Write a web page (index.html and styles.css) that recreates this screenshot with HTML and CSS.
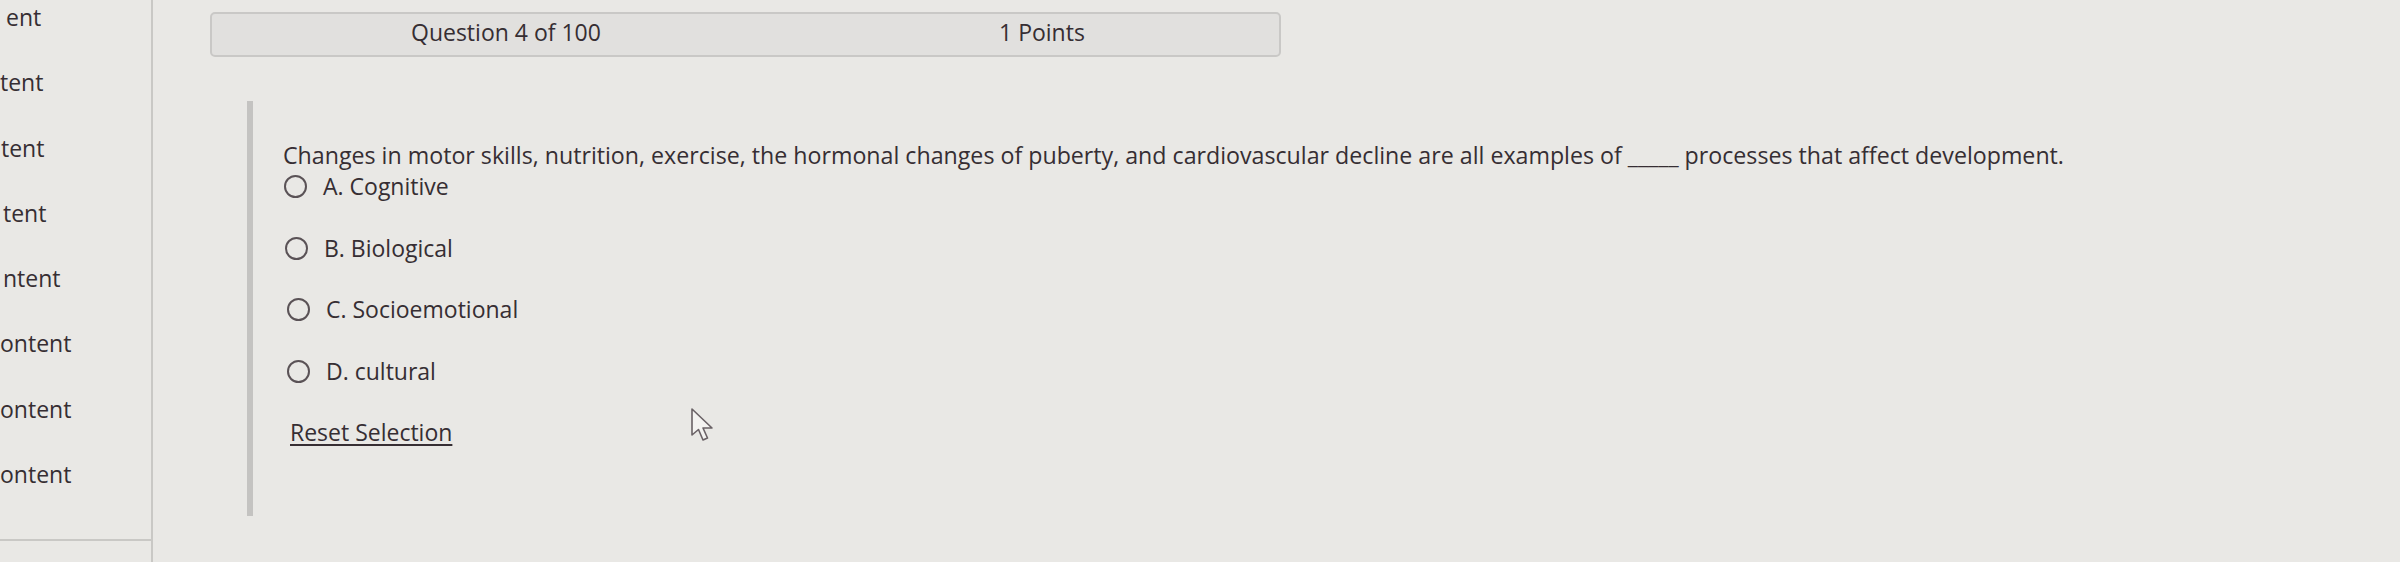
FILE: index.html
```html
<!DOCTYPE html>
<html lang="en">
<head>
<meta charset="utf-8">
<title>Question 4 of 100</title>
<link rel="stylesheet" href="styles.css">
</head>
<body>
<div class="layout">
  <aside class="sidebar">
    <ul class="nav">
      <li class="nav-item i1">ent</li>
      <li class="nav-item i2">tent</li>
      <li class="nav-item i3">tent</li>
      <li class="nav-item i4">tent</li>
      <li class="nav-item i5">ntent</li>
      <li class="nav-item i6">ontent</li>
      <li class="nav-item i7">ontent</li>
      <li class="nav-item i8">ontent</li>
    </ul>
    <div class="sidebar-footer"></div>
  </aside>
  <main class="main">
    <header class="qbar">
      <span class="qnum">Question 4 of 100</span>
      <span class="qpts">1 Points</span>
    </header>
    <section class="question">
      <p class="stem">Changes in motor skills, nutrition, exercise, the hormonal changes of puberty, and cardiovascular decline are all examples of _____ processes that affect development.</p>
      <ul class="options">
        <li class="option oa"><span class="radio"></span><span class="label">A. Cognitive</span></li>
        <li class="option ob"><span class="radio"></span><span class="label">B. Biological</span></li>
        <li class="option oc"><span class="radio"></span><span class="label">C. Socioemotional</span></li>
        <li class="option od"><span class="radio"></span><span class="label">D. cultural</span></li>
      </ul>
      <a class="reset" href="#">Reset Selection</a>
    </section>
  </main>
</div>
<svg class="cursor" width="26" height="38" viewBox="0 0 26 38" aria-hidden="true">
  <path d="M2 2 L2 28 L8.5 22.5 L13 33 L17.5 31 L13 21 L22 21 Z" fill="#f4f3f1" stroke="#6a6266" stroke-width="1.6" stroke-linejoin="round"/>
</svg>
</body>
</html>
```

FILE: styles.css
```css
* { box-sizing: border-box; }

html, body {
  margin: 0;
  padding: 0;
}

body {
  width: 2400px;
  height: 562px;
  overflow: hidden;
  background: #e9e8e5;
  font-family: "Open Sans", "Noto Sans", sans-serif;
  color: #362e33;
  position: relative;
}

.layout {
  display: flex;
  height: 562px;
}

/* Sidebar */
.sidebar {
  width: 153px;
  flex: 0 0 153px;
  border-right: 2px solid #c9c8c5;
  position: relative;
  display: flex;
  flex-direction: column;
}

.nav {
  list-style: none;
  margin: -15px 0 0 0;
  padding: 0;
  flex: 1 1 auto;
}

.nav-item {
  height: 65.3px;
  line-height: 65.3px;
  font-size: 23px;
  white-space: nowrap;
  color: #362e33;
}

.i1 { padding-left: 6px; }
.i2 { padding-left: 0; }
.i3 { padding-left: 1px; }
.i4 { padding-left: 3px; }
.i5 { padding-left: 3px; }
.i6 { padding-left: 0; }
.i7 { padding-left: 0; }
.i8 { padding-left: 0; }

.sidebar-footer {
  position: absolute;
  left: 0;
  right: 0;
  top: 539px;
  height: 30px;
  background: #e9e8e5;
  border-top: 2px solid #c9c8c5;
}

/* Main */
.main {
  flex: 1 1 auto;
  padding: 12px 0 0 57px;
}

.qbar {
  width: 1071px;
  height: 45px;
  background: #e1e0de;
  border: 2px solid #c9c8c6;
  border-radius: 5px;
  display: flex;
  align-items: center;
  padding: 0 0 5px 199px;
  font-size: 23px;
  color: #362e33;
}

.qnum { width: 588px; }

.question {
  margin: 44px 0 0 37px;
  height: 415px;
  border-left: 6px solid #c4c3c1;
  padding: 39px 0 0 30px;
}

.stem {
  margin: 0;
  font-size: 23.2px;
  line-height: 31px;
  white-space: nowrap;
}

.options {
  list-style: none;
  margin: 0;
  padding: 0;
}

.option {
  display: flex;
  align-items: center;
  height: 31px;
  margin-bottom: 30.5px;
  font-size: 23px;
  line-height: 31px;
}

.radio {
  width: 23px;
  height: 23px;
  border: 2px solid #5a5256;
  border-radius: 50%;
  margin-left: 1px;
  margin-right: 16px;
  flex: 0 0 auto;
}

.ob .radio { margin-left: 2px; }
.oc .radio, .od .radio { margin-left: 4px; margin-right: 16px; }

.reset {
  display: inline-block;
  margin-left: 7px;
  font-size: 23px;
  line-height: 31px;
  color: #362e33;
  text-decoration: underline;
  text-underline-offset: 3px;
  text-decoration-thickness: 1.5px;
}

/* Mouse pointer overlay */
.cursor {
  position: absolute;
  left: 690px;
  top: 407px;
}
```
